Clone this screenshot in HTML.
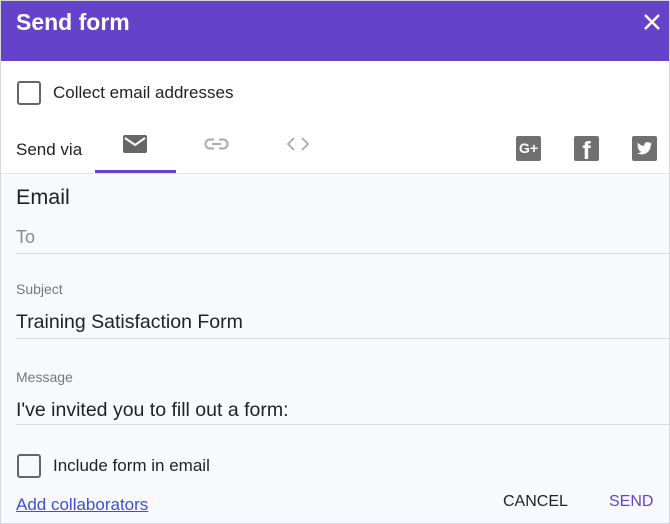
<!DOCTYPE html>
<html><head><style>
*{margin:0;padding:0;box-sizing:border-box}
body{width:670px;height:524px;overflow:hidden;background:#fff;font-family:"Liberation Sans",Arial,sans-serif;position:relative}
.frame{position:absolute;left:0;top:0;width:670px;height:524px;border:1px solid #d6d6dc}
.hdr{position:absolute;left:0;top:0;width:670px;height:61px;background:#6543c9}
.hdr .t{position:absolute;left:16px;top:9px;color:#fff;font-size:23px;font-weight:bold}
.low{position:absolute;left:1px;top:173px;width:668px;height:350px;background:#f8f9fd;border-top:1px solid #e4e4ec}
.a{position:absolute;white-space:nowrap}
.cb{position:absolute;width:24px;height:24px;border:2px solid #666;border-radius:3px}
.line{position:absolute;left:16px;width:654px;height:1px;background:#dadce0}
.ic{position:absolute;background:#707070;border-radius:2px;color:#fff;font-weight:bold;text-align:center}
</style></head><body>
<div class="hdr"><div class="t">Send form</div>
<svg style="position:absolute;left:643px;top:13px" width="18" height="18"><path d="M2 2L16 16M16 2L2 16" stroke="#fff" stroke-width="2.5"/></svg></div>
<div class="cb" style="left:17px;top:81px"></div>
<div class="a" style="left:53px;top:83px;font-size:17px;color:#222">Collect email addresses</div>
<div class="a" style="left:16px;top:140px;font-size:17px;color:#222">Send via</div>
<svg style="position:absolute;left:122px;top:134px" width="26" height="20"><rect x="1" y="1" width="24" height="18" rx="2" fill="#666"/><path d="M3 4L13 11L23 4" stroke="#fff" stroke-width="2" fill="none"/></svg>
<div style="position:absolute;left:95px;top:170px;width:81px;height:3px;background:#6543c9"></div>
<svg style="position:absolute;left:203px;top:137px" width="27" height="14"><path d="M11 2.5H7a4.5 4.5 0 0 0 0 9h4M16 2.5h4a4.5 4.5 0 0 1 0 9h-4M9 7h9" stroke="#aaa" stroke-width="2" fill="none"/></svg>
<svg style="position:absolute;left:285px;top:136px" width="26" height="16"><path d="M9 2L3 8L9 14M17 2L23 8L17 14" stroke="#aaa" stroke-width="1.8" fill="none"/></svg>
<div class="ic" style="left:516px;top:136px;width:25px;height:25px;font-size:14px;line-height:25px">G+</div>
<div class="ic" style="left:574px;top:136px;width:25px;height:25px;font-size:25px;line-height:30px">f</div>
<div class="ic" style="left:632px;top:136px;width:25px;height:25px"><svg width="25" height="25" viewBox="0 0 25 25"><path d="M20 7.5c-.6.3-1.2.4-1.8.5.7-.4 1.1-1 1.4-1.7-.6.4-1.3.6-2 .8a3.1 3.1 0 0 0-5.3 2.8 8.8 8.8 0 0 1-6.4-3.2 3.1 3.1 0 0 0 1 4.1c-.5 0-1-.2-1.4-.4 0 1.500 1.1 2.800 2.500 3-.5.1-.9.2-1.4.1.4 1.200 1.600 2.100 2.900 2.200A6.200 6.200 0 0 1 5 17c1.400.9 3 1.400 4.800 1.400 5.700 0 8.900-4.800 8.900-8.900v-.4c.5-.4 1-.9 1.300-1.600z" fill="#fff"/></svg></div>
<div class="low"></div>
<div class="a" style="left:16px;top:185px;font-size:21.5px;color:#202124">Email</div>
<div class="a" style="left:16px;top:227px;font-size:18px;color:#8a8a8a">To</div>
<div class="line" style="top:253px"></div>
<div class="a" style="left:16px;top:281px;font-size:14px;color:#777">Subject</div>
<div class="a" style="left:16px;top:311px;font-size:19.5px;color:#222">Training Satisfaction Form</div>
<div class="line" style="top:338px"></div>
<div class="a" style="left:16px;top:369px;font-size:14px;color:#777">Message</div>
<div class="a" style="left:16px;top:399px;font-size:19.5px;color:#222">I've invited you to fill out a form:</div>
<div class="line" style="top:424px"></div>
<div class="cb" style="left:17px;top:454px"></div>
<div class="a" style="left:53px;top:456px;font-size:17px;color:#222">Include form in email</div>
<div class="a" style="left:16px;top:495px;font-size:17px;color:#3b4fd8;text-decoration:underline">Add collaborators</div>
<div class="a" style="left:503px;top:493px;font-size:16px;color:#222">CANCEL</div>
<div class="a" style="left:609px;top:493px;font-size:16px;color:#6543c9">SEND</div>
<div class="frame"></div>
</body></html>
